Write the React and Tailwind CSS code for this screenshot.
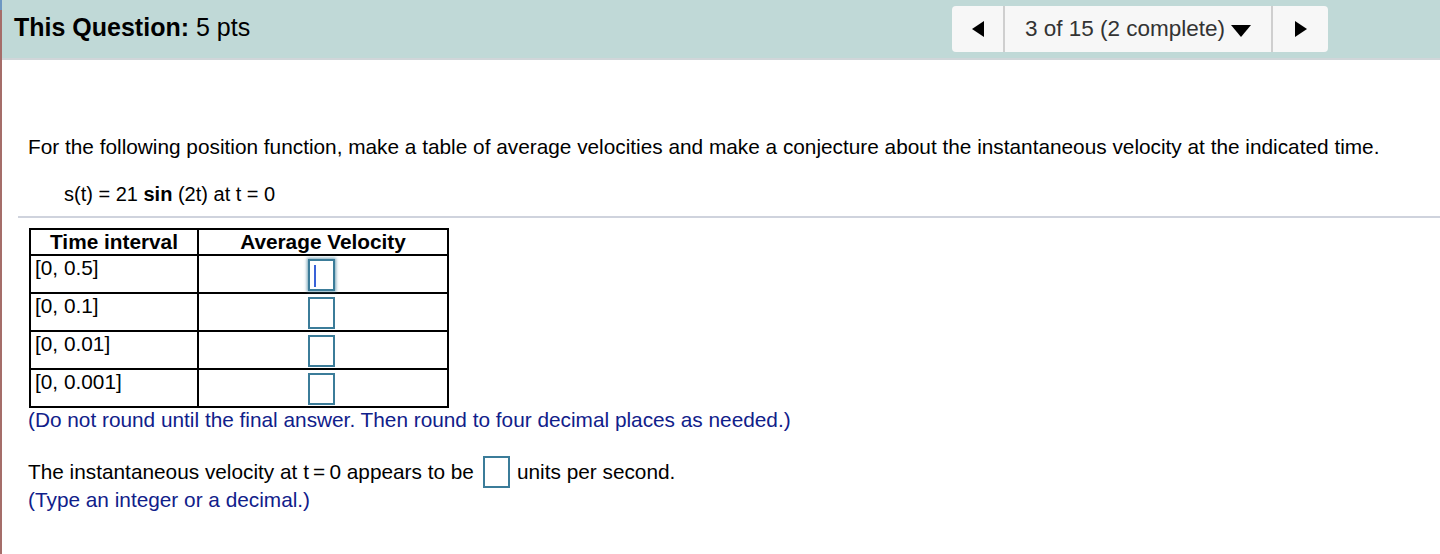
const font = { fontFamily: '"Liberation Sans", Arial, sans-serif' };

function Box({ focused }) {
  return (
    <div
      className={
        "relative h-[32px] w-[27px] border-2 border-[#3b7c99] bg-white " +
        (focused ? "shadow-[0_0_3px_1px_rgba(59,124,153,0.7)]" : "")
      }
    >
      {focused && (
        <div className="absolute left-[4px] top-[4px] h-[22px] w-[2px] bg-[#3a62d8]" />
      )}
    </div>
  );
}

const rows = ["[0, 0.5]", "[0, 0.1]", "[0, 0.01]", "[0, 0.001]"];

export default function App() {
  return (
    <div className="flex h-[554px] w-[1440px] bg-white text-black" style={font}>
      <div className="flex w-[2px] shrink-0 flex-col">
        <div className="h-[10px] bg-[#6d97c2]" />
        <div className="flex-1 bg-[#a56d69]" />
      </div>
      <div className="flex min-w-0 flex-1 flex-col">
        <header className="flex h-[60px] items-start justify-between border-b-2 border-[#d0d6d9] bg-[#c0d9d7] pl-[12px] pr-[112px]">
          <h1 className="mt-[12px] text-[25px] leading-[30px]">
            <span className="font-bold">This Question:</span> 5 pts
          </h1>
          <div className="mt-[6px] flex h-[46px] overflow-hidden rounded-[4px] bg-[#f7f7f7]">
            <button className="flex w-[53px] items-center justify-center border-r-2 border-[#cfcfcf]">
              <svg width="12" height="16" viewBox="0 0 12 16">
                <path d="M12 0 L0 8 L12 16 Z" fill="#000" />
              </svg>
            </button>
            <button className="flex w-[268px] items-center justify-center gap-[6px] border-r-2 border-[#cfcfcf] text-[22.5px] text-[#333]">
              <span>3 of 15 (2 complete)</span>
              <svg width="20" height="12" viewBox="0 0 20 12" className="mt-[3px]">
                <path d="M0 0 L20 0 L10 12 Z" fill="#000" />
              </svg>
            </button>
            <button className="flex w-[55px] items-center justify-center">
              <svg width="12" height="16" viewBox="0 0 12 16">
                <path d="M0 0 L12 8 L0 16 Z" fill="#000" />
              </svg>
            </button>
          </div>
        </header>

        <main className="flex flex-col pt-[75px] text-[20.8px]">
          <p className="pl-[26px] leading-[24px]">
            For the following position function, make a table of average velocities and make a conjecture about the instantaneous velocity at the indicated time.
          </p>
          <p className="mt-[23px] pl-[62px] text-[20px] leading-[24px]">
            s(t) = 21 <span className="font-bold">sin</span> (2t) at t = 0
          </p>
          <div className="ml-[16px] mt-[10px] h-[2px] bg-[#cfd3dd]" />

          <table className="ml-[27px] mt-[10px] w-[420px] border-collapse leading-[22px]">
            <thead>
              <tr className="h-[26px]">
                <th className="w-[168px] border-2 border-black py-0 text-center font-bold">Time interval</th>
                <th className="border-2 border-black py-0 text-center font-bold">Average Velocity</th>
              </tr>
            </thead>
            <tbody>
              {rows.map((r, i) => (
                <tr key={r} className="h-[38px]">
                  <td className="border-2 border-black px-[4px] pt-[1px] align-top">{r}</td>
                  <td className="border-2 border-black p-0 align-bottom">
                    <div className="flex justify-center pr-[3px] pb-[1px]">
                      <Box focused={i === 0} />
                    </div>
                  </td>
                </tr>
              ))}
            </tbody>
          </table>

          <p className="pl-[26px] leading-[24px] text-[#10208a]">
            (Do not round until the final answer. Then round to four decimal places as needed.)
          </p>

          <div className="mt-[24px] flex items-center pl-[26px] leading-[24px]">
            <span>The instantaneous velocity at t{"\u2009=\u2009"}0 appears to be</span>
            <div className="ml-[9px] mr-[7px]">
              <Box />
            </div>
            <span>units per second.</span>
          </div>
          <p className="pl-[26px] leading-[24px] text-[#10208a]">
            (Type an integer or a decimal.)
          </p>
        </main>
      </div>
    </div>
  );
}
